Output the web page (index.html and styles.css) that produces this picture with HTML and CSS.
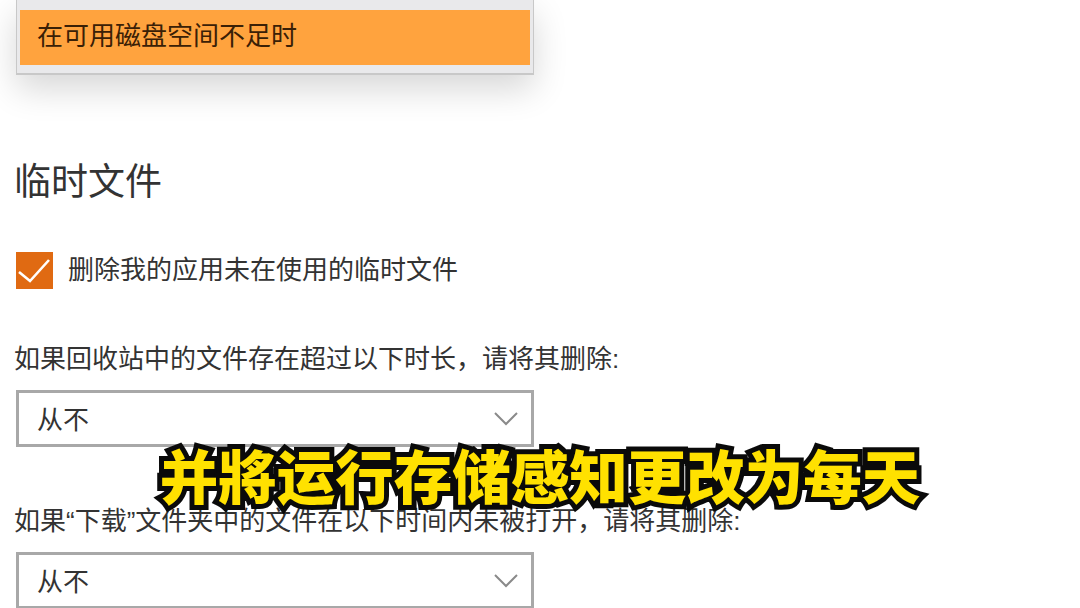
FILE: index.html
```html
<!DOCTYPE html>
<html lang="zh-CN">
<head>
  <meta charset="UTF-8">
  <title>存储感知</title>
  <link rel="stylesheet" href="styles.css">
</head>
<body>
  <main class="settings">
    <div class="menu">
      <div class="menu-item">在可用磁盘空间不足时</div>
    </div>

    <h2>临时文件</h2>

    <label class="check-row">
      <span class="checkbox">
        <svg viewBox="0 0 37 37" width="37" height="37"><path d="M3 20 L14 29 L33 8" fill="none" stroke="#fff" stroke-width="2.6"/></svg>
      </span>
      <span class="check-text">删除我的应用未在使用的临时文件</span>
    </label>

    <p class="field-label first">如果回收站中的文件存在超过以下时长，请将其删除:</p>
    <div class="select">
      <span>从不</span>
      <svg viewBox="0 0 24 14" width="24" height="14"><path d="M1 1 L12 12 L23 1" fill="none" stroke="#8a8a8a" stroke-width="2"/></svg>
    </div>

    <p class="field-label second">如果“下载”文件夹中的文件在以下时间内未被打开，请将其删除:</p>
    <div class="select">
      <span>从不</span>
      <svg viewBox="0 0 24 14" width="24" height="14"><path d="M1 1 L12 12 L23 1" fill="none" stroke="#8a8a8a" stroke-width="2"/></svg>
    </div>
  </main>

  <div class="caption">并將运行存储感知更改为每天</div>
</body>
</html>
```

FILE: styles.css
```css
html, body {
  margin: 0;
  padding: 0;
  height: 608px;
  overflow: hidden;
  background: #fff;
}
body {
  font-family: "Liberation Sans", "Noto Sans CJK SC", sans-serif;
  color: #333;
}
.settings {
  width: 518px;
  margin-left: 16px;
}
.menu {
  height: 75px;
  padding: 10px 3px;
  box-sizing: border-box;
  background: #e9e9eb;
  border: solid #c8c8c8;
  border-width: 0 1px 2px 1px;
  box-shadow: 0 14px 34px rgba(0, 0, 0, 0.16);
}
.menu-item {
  height: 55px;
  line-height: 53px;
  padding-left: 17px;
  background: #ffa33e;
  font-size: 26px;
  color: #3a2006;
}
h2 {
  margin: 80px 0 0 -2px;
  font-size: 37px;
  line-height: 56px;
  font-weight: 400;
}
.check-row {
  display: flex;
  align-items: flex-start;
  gap: 15px;
  margin-top: 41px;
  font-size: 26px;
}
.check-text { line-height: 37px; }
.checkbox {
  display: block;
  width: 37px;
  height: 37px;
  background: #e06a12;
}
.field-label {
  margin: 0 0 0 -2px;
  font-size: 26px;
  line-height: 38px;
  white-space: nowrap;
}
.field-label.first { margin-top: 51px; }
.field-label.second { margin-top: 55px; }
.select {
  display: flex;
  align-items: center;
  justify-content: space-between;
  box-sizing: border-box;
  height: 57px;
  margin-top: 12px;
  padding: 0 13px 0 18px;
  border: 3px solid #a8a8a8;
  font-size: 26px;
}
.select span { padding-bottom: 2px; }
.caption {
  position: absolute;
  left: 0;
  right: 0;
  top: 434px;
  text-align: center;
  font-family: "Noto Sans CJK SC", sans-serif;
  font-size: 58.5px;
  line-height: 80px;
  font-weight: 900;
  color: #ffe100;
  white-space: nowrap;
  -webkit-text-stroke: 10px #0a0a0a;
  paint-order: stroke fill;
}
```
